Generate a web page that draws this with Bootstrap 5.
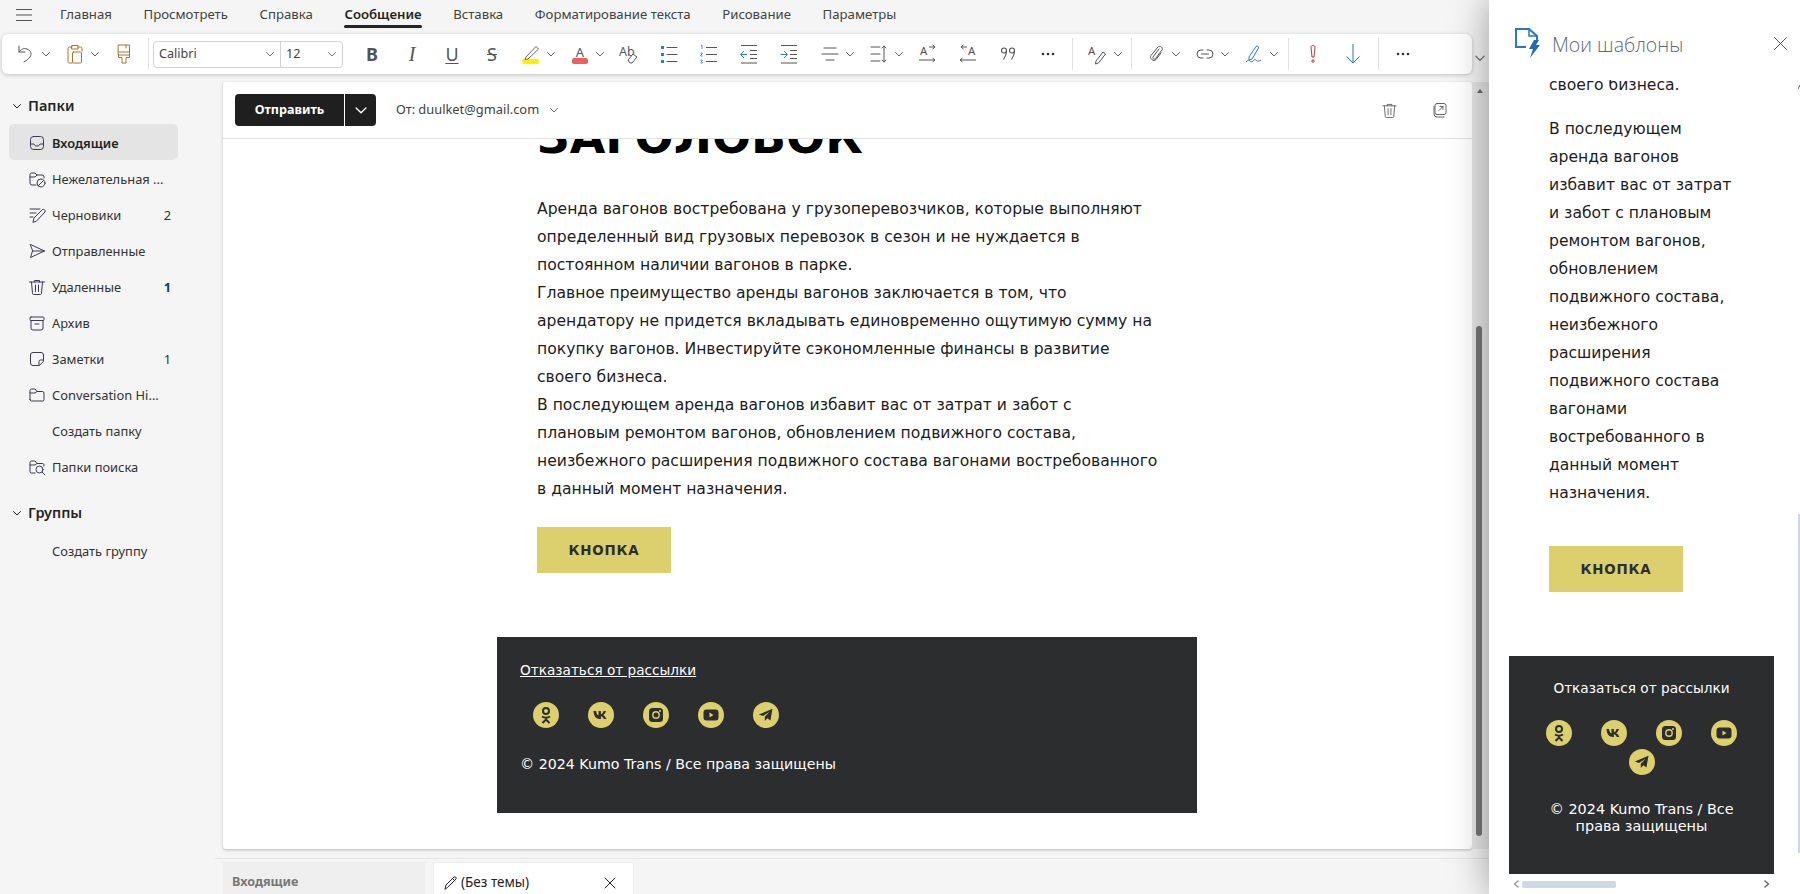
<!DOCTYPE html>
<html lang="ru">
<head>
<meta charset="utf-8">
<title>Outlook</title>
<link href="https://cdn.jsdelivr.net/npm/bootstrap@5.3.0/dist/css/bootstrap.min.css" rel="stylesheet">
<style>
html,body{height:100%;margin:0;overflow:hidden}
body{background:#f5f5f5;font-family:"Noto Sans","Open Sans",sans-serif;color:#242424}
.app{width:1800px;height:894px;overflow:hidden}
.mainp{width:1489px;height:894px;flex:none}
.sico{display:block;fill:none;stroke:currentColor;stroke-width:1;stroke-linecap:round;stroke-linejoin:round}
.tabrow{height:34px;flex:none;font-size:13.2px;color:#424242;padding-bottom:4px}
.burger{width:60px;padding-left:16px;color:#555}
.tabx{margin-right:31.600px;position:relative;white-space:nowrap}
.tabx.act{font-weight:600;color:#242424}
.tabx.act::after{content:"";display:block;height:3px;background:#242424;border-radius:2px;position:absolute;left:0;right:0;top:20px}
.ribrow{height:40px;flex:none}
.ribbon{margin-left:2px;width:1470px;height:40px;flex:none;background:#fff;border-radius:6px;box-shadow:0 1px 4px rgba(0,0,0,.22);padding-left:12px;color:#555}
.ribcol{margin:18px 0 0 2px;color:#666}
.cell24,.cell40,.cellc{display:flex;align-items:center;justify-content:center;flex:none;height:32px}
.cell24{width:24px}.cell40{width:40px}.cellc{width:16px;color:#666}
.gr49{display:flex;flex:none;width:49px}
.gr40{display:flex;flex:none;width:40px}
.vsep{width:1px;height:32px;background:#e0e0e0;flex:none}
.m12{margin-left:12px}.m5{margin-left:5px}.m4{margin-left:4px}.m6{margin-left:6px}.m7{margin-left:7px}.m9{margin-left:9px}.m8{margin-left:8px}.m13{margin-left:13px}.mn4{margin-left:-4px}
.fontsel{width:190px;height:27px;border:1px solid #d1d1d1;border-radius:4px;font-size:12.6px;color:#424242;flex:none}
.fnm{width:127px;border-right:1px solid #d1d1d1;padding:0 5px;height:100%}
.fsz{flex:1;padding:0 5px;height:100%}
.chvg{color:#777}
.tchar{font-size:18px;line-height:1;color:#555}
.serifi{font-family:"Liberation Serif",serif;font-style:italic;font-size:20px}
.uline{text-decoration:underline;text-underline-offset:2px;text-decoration-thickness:1px}
.strk{text-decoration:line-through;text-decoration-thickness:1px}
.bronze{color:#a8742a}
.bodyrow{min-height:0}
.sidep{width:223px;flex:none;padding-top:14px;font-size:12.9px;color:#333}
.shead{height:36px;font-size:14.5px;font-weight:600;padding-left:12px;gap:6px;color:#242424}
.shead.grp{margin-top:11px}
.sitem{height:36px;width:169px;margin-left:9px;padding:4px 7px 0 19px;border-radius:5px;white-space:nowrap}
.sitem.newg{margin-top:1px}
.sitem.sel{background:#e4e4e4;font-weight:600;color:#242424}
.sitem .lbl{margin-left:6px;flex:1;overflow:hidden}
.sitem .sic{width:18px;flex:none;color:#3a3a55;margin-top:-3px}
.noicon .lbl{margin-left:24px}
.cnt{flex:none;width:14px;text-align:right}
.cnt.bld{font-weight:700;color:#0f3f66}
.composer{width:1249px;margin:8px 0 9px;background:#fff;border-radius:3px;box-shadow:0 1px 3px rgba(0,0,0,.25);overflow:hidden;flex:none}
.chead{height:57px;border-bottom:1px solid #e1e1e1;padding-left:12px;flex:none}
.sendgrp{width:141px;height:32px;background:#1f1f1f;border-radius:4px;color:#fff;flex:none}
.sendt{width:110px;font-size:12.6px;font-weight:700;text-align:center;border-right:1px solid #fff;line-height:32px}
.sendc{flex:1}
.fromt{margin-left:20px;font-size:12.9px;color:#424242;gap:10px}
.ot{margin-right:3px}
.cact{margin-left:auto;padding-right:24px;gap:35px;color:#666}
.scrollv{overflow:hidden;min-height:0;flex:1}
.mailb{width:700px;margin:-26px 0 0 274px;font-family:"DejaVu Sans","Noto Sans",sans-serif;color:#1c1c1c}
.mailin{padding:0 39px 0 40px}
.bighd{font-size:46px;font-weight:700;line-height:48px;margin:0 0 34px;color:#000;white-space:nowrap}
.bodytx{font-size:15.6px;line-height:28px;margin:0;white-space:nowrap}
.yelbtn{display:flex;align-items:center;justify-content:center;width:134px;height:46px;padding-top:3px;background:#dccf6d;color:#2c2d2f;font-weight:700;font-size:13.4px;letter-spacing:.8px;text-decoration:none;flex:none}
.mt24x{margin-top:24px}
.mt40x{margin-top:40px}
.mfoot{background:#2c2d2f;color:#fff;width:700px;height:176px;margin-top:64px;padding:23px 23px 0;font-size:13.65px}
.mfoot a,.pfoot a{color:#fff;line-height:20px;display:block}
.socrow{display:flex;flex-wrap:wrap;margin:20px 0 25px -2px}
.soccell{width:55px;height:29px;display:flex;align-items:center;justify-content:center;flex:none}
.copyl{line-height:20px;font-size:14.2px}
.vbar{width:17px;margin:8px 0 9px;flex:none;background:#e6e6e6;display:flex;flex-direction:column;align-items:center}
.varrow{width:0;height:0;border-left:3px solid transparent;border-right:3px solid transparent;border-bottom:4px solid #666;margin-top:7px;margin-left:-2px}
.vthumb{width:6px;margin-left:-3px;background:#757575;border-radius:3px;height:510px;margin-top:233px}
.btmrow{height:36px;margin-left:215px;border-top:1px solid #e6e6e6;padding:3px 0 0 8px;gap:8px;flex:none;font-size:12.6px}
.btab{width:202px;height:40px;padding-left:9px;background:#efefef;color:#777;font-weight:700;flex:none}
.btab2{width:201px;height:40px;padding:0 17px 0 9px;background:#fff;color:#242424;border:1px solid #eee;border-bottom:0;gap:2px;font-size:13.5px;flex:none}
.btab2 .nm{flex:1}
.panelx{width:311px;height:894px;background:#fff;box-shadow:0 0 36px rgba(0,0,0,.38);position:relative;z-index:2;flex:none}
.phead{height:80px;flex:none;padding:0 13px 0 26px}
.picon{margin-top:8px}
.ptitle{margin-left:11px;font-size:19.5px;font-weight:300;color:#5d6a76;flex:1;padding-top:10px;font-family:"Open Sans","Noto Sans",sans-serif}
.pxclose{color:#555;margin-top:6px}
.pbodyr{min-height:0;flex:1}
.pcontent{width:309px;flex:none;font-family:"DejaVu Sans",sans-serif;color:#1c1c1c;overflow:hidden}
.ptext{padding-left:60px;margin:-9px 0 0}
.ptext p{font-size:15.6px;line-height:28px;margin:0 0 16px;white-space:nowrap}
.ptext p:last-child{margin-bottom:0}
.pbtn{margin-left:60px;margin-top:39px}
.pfoot{background:#2c2d2f;color:#fff;width:265px;height:218px;margin:64px 0 0 20px;padding:24px 10px 0;font-size:14.4px;text-align:center;line-height:17px}
.pfoot a{text-decoration:none;line-height:17px;white-space:nowrap;font-size:13.65px}
.pfoot .socrow{justify-content:center;margin:21px 0 25px}
.hbar{height:20px;margin-left:20px;width:265px;gap:3px;padding:0 4px;color:#999}
.hthumb{width:94px;height:7px;background:#cfd9e3;border-radius:2px;flex:none}
.hsp{flex:1}
.harrr{color:#666}
.pstrip{flex:1;display:flex;flex-direction:column;align-items:flex-start}
.pmark{color:#666;margin-top:4px;flex:none}
.pthumb{width:2px;height:339px;background:#cfd9e3;margin-top:424px;flex:none}
</style>
</head>
<body>
<svg width="0" height="0" class="d-block position-absolute">
  <defs>
    <symbol id="chv" viewBox="0 0 10 10"><path d="M1.500 3.500 5 7l3.500-3.500"/></symbol>
    <symbol id="soc-ok" viewBox="0 0 26 26"><circle cx="13" cy="13" r="13" fill="#dccf6d" stroke="none"/><circle cx="13" cy="9" r="3" fill="none" stroke="#2c2d2f" stroke-width="2"/><path d="M9 14.500c2.500 1.600 5.500 1.600 8 0M13 16v1.500M9.500 21l3.500-3.500 3.500 3.500" fill="none" stroke="#2c2d2f" stroke-width="2"/></symbol>
    <symbol id="soc-vk" viewBox="0 0 26 26"><circle cx="13" cy="13" r="13" fill="#dccf6d" stroke="none"/><path d="M5.500 9h2.600c.2 2.600 1.300 4.100 2.400 4.500V9h2.400v3.300c1.100-.2 2.200-1.600 2.600-3.300h2.400c-.4 2-1.700 3.600-2.700 4.200 1 .5 2.500 1.800 3.200 3.900h-2.600c-.5-1.500-1.700-2.800-2.900-2.900V17H12c-3.900 0-6.300-3-6.500-8z" fill="#2c2d2f" stroke="none"/></symbol>
    <symbol id="soc-ig" viewBox="0 0 26 26"><circle cx="13" cy="13" r="13" fill="#dccf6d" stroke="none"/><rect x="6" y="6" width="14" height="14" rx="3.500" fill="#2c2d2f" stroke="none"/><circle cx="13" cy="13" r="3.200" fill="none" stroke="#dccf6d" stroke-width="1.400"/><circle cx="17" cy="9" r="1" fill="#dccf6d" stroke="none"/></symbol>
    <symbol id="soc-yt" viewBox="0 0 26 26"><circle cx="13" cy="13" r="13" fill="#dccf6d" stroke="none"/><rect x="5.500" y="7.500" width="15" height="11" rx="3" fill="#2c2d2f" stroke="none"/><path d="M11.500 10.500v5l4-2.500z" fill="#dccf6d" stroke="none"/></symbol>
    <symbol id="soc-tg" viewBox="0 0 26 26"><circle cx="13" cy="13" r="13" fill="#dccf6d" stroke="none"/><path d="M19.500 6.800 5.800 12.600l4.200 1.500 6.500-4.300-4.700 5v4.300l2.600-2.900 3 2.200z" fill="#2c2d2f" stroke="none"/></symbol>
  </defs>
</svg>
<div class="app d-flex">
  <div class="mainp d-flex flex-column">
    <div class="tabrow d-flex align-items-center">
      <div class="burger"><svg class="sico" width="16" height="14" viewBox="0 0 16 14"><path d="M0 1.500h16M0 7h16M0 12.500h16"/></svg></div>
      <div class="tabx">Главная</div>
      <div class="tabx">Просмотреть</div>
      <div class="tabx">Справка</div>
      <div class="tabx act">Сообщение</div>
      <div class="tabx">Вставка</div>
      <div class="tabx">Форматирование текста</div>
      <div class="tabx">Рисование</div>
      <div class="tabx">Параметры</div>
    </div>
    <div class="ribrow d-flex">
    <div class="ribbon d-flex align-items-center">
      <div class="gr49"><div class="cell24"><svg class="sico" width="18" height="20" viewBox="0 0 18 20"><path d="M2 2v6h6M2 8c2-3 5-4 8-3 4 1.500 5 5 3 8-1.500 2-3.500 3.500-6 5"/></svg></div><div class="cellc"><svg class="sico" width="10" height="10"><use href="#chv"/></svg></div></div>
      <div class="gr49"><div class="cell24 bronze"><svg class="sico" width="16" height="20" viewBox="0 0 16 20"><path d="M5 3H2.500A1.500 1.500 0 0 0 1 4.500v13A1.500 1.500 0 0 0 2.500 19H5M11 3h2.500A1.500 1.500 0 0 1 15 4.500V7M5 1.500h6V5H5zM6.500 8h7a1 1 0 0 1 1 1v9a1 1 0 0 1-1 1h-7a1 1 0 0 1-1-1V9a1 1 0 0 1 1-1z"/></svg></div><div class="cellc"><svg class="sico" width="10" height="10"><use href="#chv"/></svg></div></div>
      <div class="cell24 bronze"><svg class="sico" width="14" height="20" viewBox="0 0 14 20"><path d="M1.500 1h11v10h-11zM1.500 8h11M1.500 11v2.500h3.500V19h4v-5.500h3.500V11M9 1v3"/></svg></div>
      <div class="vsep m12"></div>
      <div class="fontsel d-flex m4">
        <div class="fnm d-flex align-items-center justify-content-between"><span>Calibri</span><svg class="sico chvg" width="10" height="10"><use href="#chv"/></svg></div>
        <div class="fsz d-flex align-items-center justify-content-between"><span>12</span><svg class="sico chvg" width="10" height="10"><use href="#chv"/></svg></div>
      </div>
      <div class="cell40 m9"><span class="tchar fw-bold">B</span></div>
      <div class="cell40"><span class="tchar serifi">I</span></div>
      <div class="cell40"><span class="tchar uline">U</span></div>
      <div class="cell40"><span class="tchar strk">S</span></div>
      <div class="gr49 m7"><div class="cell24"><svg width="20" height="20" viewBox="0 0 20 20"><rect x="1" y="15" width="17" height="5" rx="2" fill="#ffef00"/><path d="M5 13 15 2.500l2.500 2.500L7 15l-3 .5z" fill="#fff" stroke="#666"/></svg></div><div class="cellc"><svg class="sico" width="10" height="10"><use href="#chv"/></svg></div></div>
      <div class="gr49"><div class="cell24"><svg width="20" height="28" viewBox="0 -4 20 28"><rect x="2" y="14" width="16" height="6" rx="2" fill="#ea5f5f"/><text x="10" y="12.500" text-anchor="middle" font-size="13" font-family="Noto Sans" fill="#555">A</text></svg></div><div class="cellc"><svg class="sico" width="10" height="10"><use href="#chv"/></svg></div></div>
      <div class="cell24"><svg width="20" height="28" viewBox="0 -4 20 28"><text x="0" y="12" font-size="12.500" font-family="Noto Sans" fill="#555">Ab</text><path d="M9 16l5-6 4 3-5 6h-2z" fill="#fff" stroke="#555"/></svg></div>
      <div class="cell40 m8"><svg class="sico" width="20" height="20" viewBox="0 0 20 20"><rect x="2" y="2" width="3" height="3" fill="#2b7cd3" stroke="none"/><rect x="2" y="9" width="3" height="3" fill="#2b7cd3" stroke="none"/><rect x="2" y="16" width="3" height="3" fill="#2b7cd3" stroke="none"/><path d="M8 3.500h10M8 10.500h10M8 17.500h10"/></svg></div>
      <div class="cell40"><svg width="20" height="20" viewBox="0 0 20 20" fill="none" stroke="#555"><path d="M7 3.500h11M7 10.500h11M7 17.500h11"/><path d="M2 1.500 3 1v4M1.500 9h2l-2 3h2M1.500 16h2l-1 1.500 1 1.500h-2" stroke="#2b7cd3" stroke-width=".8"/></svg></div>
      <div class="cell40"><svg width="20" height="20" viewBox="0 0 20 20" fill="none" stroke="#555"><path d="M2 1.500h16M11 6.500h7M11 10.500h7M11 14.500h7M2 19h16"/><path d="M8 10.500H2M5 7l-3.500 3.500L5 14" stroke="#2b7cd3"/></svg></div>
      <div class="cell40"><svg width="20" height="20" viewBox="0 0 20 20" fill="none" stroke="#555"><path d="M2 1.500h16M11 6.500h7M11 10.500h7M11 14.500h7M2 19h16"/><path d="M1.500 10.500H8M5 7l3.500 3.500L5 14" stroke="#2b7cd3"/></svg></div>
      <div class="gr49 m9"><div class="cell24"><svg class="sico" width="18" height="16" viewBox="0 0 18 16"><path d="M3 2h12M1 8h16M5 14h8"/></svg></div><div class="cellc"><svg class="sico" width="10" height="10"><use href="#chv"/></svg></div></div>
      <div class="gr49"><div class="cell24"><svg class="sico" width="18" height="20" viewBox="0 0 18 20"><path d="M1 3h9M1 10h9M1 17h9M14 2v16M12 4l2-2 2 2M12 16l2 2 2-2"/></svg></div><div class="cellc"><svg class="sico" width="10" height="10"><use href="#chv"/></svg></div></div>
      <div class="cell24"><svg width="20" height="28" viewBox="0 -4 20 28" fill="none" stroke="#555"><text x="2" y="11" font-size="11.500" font-family="Noto Sans" fill="#555" stroke="none">A</text><path d="M11 3h6M14.500 1l2.500 2-2.500 2M1 16h16M14.500 14l2.500 2-2.500 2"/></svg></div>
      <div class="cell40 m8"><svg width="20" height="28" viewBox="0 -4 20 28" fill="none" stroke="#555"><text x="10" y="11" font-size="11.500" font-family="Noto Sans" fill="#555" stroke="none">A</text><path d="M3 3h6M5.500 1 3 3l2.500 2M2 16h16M4.500 14 2 16l2.500 2"/></svg></div>
      <div class="cell40"><svg width="16" height="16" viewBox="0 0 16 16" fill="none" stroke="#555" stroke-width="1.100"><circle cx="4" cy="4.500" r="2.500"/><circle cx="12" cy="4.500" r="2.500"/><path d="M6.500 4.500c0 3-1 6-3 9M14.500 4.500c0 3-1 6-3 9"/></svg></div>
      <div class="cell40"><svg width="14" height="4" viewBox="0 0 14 4" fill="#333"><circle cx="2" cy="2" r="1.300"/><circle cx="7" cy="2" r="1.300"/><circle cx="12" cy="2" r="1.300"/></svg></div>
      <div class="vsep m4"></div>
      <div class="gr49 m13"><div class="cell24"><svg width="20" height="28" viewBox="0 -4 20 28" fill="none" stroke="#555"><text x="0" y="11" font-size="11.500" font-family="Noto Sans" fill="#555" stroke="none">A</text><path d="M8 17 15 8l2.500 2L10.500 19l-3 1z"/></svg></div><div class="cellc"><svg class="sico" width="10" height="10"><use href="#chv"/></svg></div></div>
      <div class="vsep mn4"></div>
      <div class="gr49 m12"><div class="cell24"><svg class="sico" width="18" height="20" viewBox="0 0 18 20"><path d="M12 5 6 13c-1 1.500 1.500 3 2.500 1.500L15 6c1.500-2-2-5-4-3L4 11.500c-2 2.500 2.500 7 5 4L14 9"/></svg></div><div class="cellc"><svg class="sico" width="10" height="10"><use href="#chv"/></svg></div></div>
      <div class="gr49"><div class="cell24"><svg class="sico" width="18" height="12" viewBox="0 0 18 12"><path d="M7 2H5a4 4 0 0 0 0 8h2M11 2h2a4 4 0 0 1 0 8h-2M5.500 6h7"/></svg></div><div class="cellc"><svg class="sico" width="10" height="10"><use href="#chv"/></svg></div></div>
      <div class="gr40"><div class="cell24"><svg width="18" height="20" viewBox="0 0 18 20" fill="none" stroke="#2b78c2"><path d="M4 13 11 2.500c1-1 3 0 2.500 1.500L7 15l-3 1z"/><path d="M1 18c2-2 3-2 4-1s2 1 3 0 2-2 3-1 2 2 5 0"/></svg></div><div class="cellc"><svg class="sico" width="10" height="10"><use href="#chv"/></svg></div></div>
      <div class="vsep m6"></div>
      <div class="cell40 m4"><svg width="8" height="20" viewBox="0 0 8 20" fill="none" stroke="#a4262c" stroke-width=".9"><path d="M2 3c0-2 4-2 4 0l-1 10H3z"/><circle cx="4" cy="17" r="1.200"/></svg></div>
      <div class="cell40"><svg width="16" height="22" viewBox="0 0 16 22" fill="none" stroke="#1f77c9"><path d="M8 1v19M1.500 13.500 8 20l6.500-6.500"/></svg></div>
      <div class="vsep m5"></div>
      <div class="cell40 m4"><svg width="14" height="4" viewBox="0 0 14 4" fill="#333"><circle cx="2" cy="2" r="1.300"/><circle cx="7" cy="2" r="1.300"/><circle cx="12" cy="2" r="1.300"/></svg></div>
    </div>
    <svg class="sico ribcol" width="12" height="12" viewBox="0 0 10 10"><path d="M1.500 3.500 5 7l3.500-3.500"/></svg>
    </div>
    <div class="bodyrow d-flex flex-grow-1">
      <div class="sidep">
        <div class="shead d-flex align-items-center"><svg class="sico" width="10" height="10"><use href="#chv"/></svg><span>Папки</span></div>
        <div class="sitem sel d-flex align-items-center"><div class="sic"><svg class="sico" width="18" height="18" viewBox="0 0 18 18"><rect x="2.500" y="2.500" width="13" height="13" rx="3"/><path d="M2.500 10h3.500c.5 1.500 1.500 2 3 2s2.500-.5 3-2h3.500"/></svg></div><span class="lbl">Входящие</span></div>
        <div class="sitem d-flex align-items-center"><div class="sic"><svg class="sico" width="18" height="18" viewBox="0 0 18 18"><path d="M8 15H4a2 2 0 0 1-2-2V4.500A1.500 1.500 0 0 1 3.500 3H7l2 2h5a2 2 0 0 1 2 2v1M2 7h5l2-2"/><circle cx="13" cy="13" r="4"/><path d="m10.500 15.500 5-5"/></svg></div><span class="lbl">Нежелательная ...</span></div>
        <div class="sitem d-flex align-items-center"><div class="sic"><svg class="sico" width="18" height="18" viewBox="0 0 18 18"><path d="M2 3h10M2 7h6M2 11h3M5 16l1-4 8.500-8.500c1-1 3.500 1 2.500 2.500L8.500 15z"/></svg></div><span class="lbl">Черновики</span><span class="cnt">2</span></div>
        <div class="sitem d-flex align-items-center"><div class="sic"><svg class="sico" width="18" height="18" viewBox="0 0 18 18"><path d="M2.500 2.500 16.500 9l-14 6.500L4.500 9zM4.500 9h12"/></svg></div><span class="lbl">Отправленные</span></div>
        <div class="sitem d-flex align-items-center"><div class="sic"><svg class="sico" width="18" height="18" viewBox="0 0 18 18"><path d="M1.500 4h15M6.500 4V2.500h5V4M3.500 4l1 11.500c0 .5.500 1 1 1h7c.5 0 1-.5 1-1l1-11.500M7.500 7v6.500M10.500 7v6.500"/></svg></div><span class="lbl">Удаленные</span><span class="cnt bld">1</span></div>
        <div class="sitem d-flex align-items-center"><div class="sic"><svg class="sico" width="18" height="18" viewBox="0 0 18 18"><rect x="2" y="3" width="14" height="3.500" rx="1"/><path d="M3 6.500V14a2 2 0 0 0 2 2h8a2 2 0 0 0 2-2V6.500M7 10h4"/></svg></div><span class="lbl">Архив</span></div>
        <div class="sitem d-flex align-items-center"><div class="sic"><svg class="sico" width="18" height="18" viewBox="0 0 18 18"><path d="M11 15.500H5A2.500 2.500 0 0 1 2.500 13V5A2.500 2.500 0 0 1 5 2.500h8A2.500 2.500 0 0 1 15.500 5v6zM15.500 10H12.500A1.500 1.500 0 0 0 11 11.500v4"/></svg></div><span class="lbl">Заметки</span><span class="cnt">1</span></div>
        <div class="sitem d-flex align-items-center"><div class="sic"><svg class="sico" width="18" height="18" viewBox="0 0 18 18"><path d="M2 13.500v-9A1.500 1.500 0 0 1 3.500 3H7l2 2.500h5.500A1.500 1.500 0 0 1 16 7v6.500a1.500 1.500 0 0 1-1.500 1.500h-11A1.500 1.500 0 0 1 2 13.500zM2 7h5l2-1.500"/></svg></div><span class="lbl">Conversation Hi...</span></div>
        <div class="sitem noicon d-flex align-items-center"><span class="lbl">Создать папку</span></div>
        <div class="sitem d-flex align-items-center"><div class="sic"><svg class="sico" width="18" height="18" viewBox="0 0 18 18"><path d="M7 15H3.500A1.500 1.500 0 0 1 2 13.500v-9A1.500 1.500 0 0 1 3.500 3H7l2 2.500h5.500A1.500 1.500 0 0 1 16 7v1M2 7h5l2-1.500"/><circle cx="11.500" cy="11.500" r="3.500"/><path d="m14 14 3 3"/></svg></div><span class="lbl">Папки поиска</span></div>
        <div class="shead grp d-flex align-items-center"><svg class="sico" width="10" height="10"><use href="#chv"/></svg><span>Группы</span></div>
        <div class="sitem newg noicon d-flex align-items-center"><span class="lbl">Создать группу</span></div>
      </div>
      <div class="composer d-flex flex-column">
        <div class="chead d-flex align-items-center">
          <div class="sendgrp d-flex align-items-center"><div class="sendt">Отправить</div><div class="sendc d-flex justify-content-center"><svg class="sico" width="14" height="14" viewBox="0 0 10 10"><path d="M1.500 3.500 5 7l3.500-3.500"/></svg></div></div>
          <div class="fromt d-flex align-items-center"><span><span class="ot">От:</span>duulket@gmail.com</span><svg class="sico chvg" width="10" height="10"><use href="#chv"/></svg></div>
          <div class="cact d-flex align-items-center">
            <svg class="sico" width="15" height="17" viewBox="0 0 16 18"><path d="M1 4h14M5.500 4V2.500h5V4M2.500 4l1 11.500c0 .5.500 1 1 1h7c.5 0 1-.5 1-1l1-11.500M6.500 7v6.500M9.500 7v6.500"/></svg>
            <svg class="sico" width="16" height="18" viewBox="0 0 16 18"><rect x="3" y="2.500" width="11" height="11" rx="2"/><path d="M2 5v8a3 3 0 0 0 3 3h7M7 9.500l4-4M8 5.500h3v3"/></svg>
          </div>
        </div>
        <div class="scrollv">
          <div class="mailb">
            <div class="mailin">
              <h1 class="bighd">ЗАГОЛОВОК</h1>
              <p class="bodytx">Аренда вагонов востребована у грузоперевозчиков, которые выполняют<br>определенный вид грузовых перевозок в сезон и не нуждается в<br>постоянном наличии вагонов в парке.<br>Главное преимущество аренды вагонов заключается в том, что<br>арендатору не придется вкладывать единовременно ощутимую сумму на<br>покупку вагонов. Инвестируйте сэкономленные финансы в развитие<br>своего бизнеса.<br>В последующем аренда вагонов избавит вас от затрат и забот с<br>плановым ремонтом вагонов, обновлением подвижного состава,<br>неизбежного расширения подвижного состава вагонами востребованного<br>в данный момент назначения.</p>
              <a class="yelbtn mt24x" href="#">КНОПКА</a>
            </div>
            <div class="mfoot">
              <a href="#">Отказаться от рассылки</a>
              <div class="socrow">
                <div class="soccell"><svg width="26" height="26"><use href="#soc-ok"/></svg></div>
                <div class="soccell"><svg width="26" height="26"><use href="#soc-vk"/></svg></div>
                <div class="soccell"><svg width="26" height="26"><use href="#soc-ig"/></svg></div>
                <div class="soccell"><svg width="26" height="26"><use href="#soc-yt"/></svg></div>
                <div class="soccell"><svg width="26" height="26"><use href="#soc-tg"/></svg></div>
              </div>
              <div class="copyl">© 2024 Kumo Trans / Все права защищены</div>
            </div>
          </div>
        </div>
      </div>
      <div class="vbar"><div class="varrow"></div><div class="vthumb"></div></div>
    </div>
    <div class="btmrow d-flex">
      <div class="btab d-flex align-items-center">Входящие</div>
      <div class="btab2 d-flex align-items-center"><svg class="sico" width="16" height="16" viewBox="0 0 16 16"><path d="M2 14l1-4 8-8c1-1 3 1 2 2l-8 8zM9.500 3.500l2.500 2.500"/></svg><span class="nm">(Без темы)</span><svg class="sico" width="12" height="12" viewBox="0 0 12 12"><path d="m1 1 10 10M11 1 1 11"/></svg></div>
    </div>
  </div>
  <div class="panelx d-flex flex-column">
    <div class="phead d-flex align-items-center">
      <svg class="picon" width="26" height="32" viewBox="0 0 26 32" fill="none"><path d="M11 19H1V1h13l8 7v5" stroke="#2b78c2" stroke-width="2"/><path d="M14 1v7h8" stroke="#2b78c2" stroke-width="1.500"/><path d="M19 12h5l-3 5h4L15 30l3-9h-4z" fill="#1f6cb5"/></svg>
      <div class="ptitle">Мои шаблоны</div>
      <svg class="sico pxclose" width="13" height="13" viewBox="0 0 13 13"><path d="m.5.500 12 12M12.500.5l-12 12"/></svg>
    </div>
    <div class="pbodyr d-flex">
      <div class="pcontent">
        <div class="ptext">
          <p>своего бизнеса.</p>
          <p>В последующем<br>аренда вагонов<br>избавит вас от затрат<br>и забот с плановым<br>ремонтом вагонов,<br>обновлением<br>подвижного состава,<br>неизбежного<br>расширения<br>подвижного состава<br>вагонами<br>востребованного в<br>данный момент<br>назначения.</p>
        </div>
        <a class="yelbtn pbtn" href="#">КНОПКА</a>
        <div class="pfoot">
          <a href="#">Отказаться от рассылки</a>
          <div class="socrow">
            <div class="soccell"><svg width="26" height="26"><use href="#soc-ok"/></svg></div>
            <div class="soccell"><svg width="26" height="26"><use href="#soc-vk"/></svg></div>
            <div class="soccell"><svg width="26" height="26"><use href="#soc-ig"/></svg></div>
            <div class="soccell"><svg width="26" height="26"><use href="#soc-yt"/></svg></div>
            <div class="soccell"><svg width="26" height="26"><use href="#soc-tg"/></svg></div>
          </div>
          <div>© 2024 Kumo Trans / Все<br>права защищены</div>
        </div>
        <div class="hbar d-flex align-items-center">
          <svg class="sico" width="6" height="8" viewBox="0 0 6 8"><path d="M5 1 1.500 4 5 7" stroke-width="1.500"/></svg>
          <div class="hthumb"></div><div class="hsp"></div>
          <svg class="sico harrr" width="6" height="8" viewBox="0 0 6 8"><path d="M1 1l3.500 3L1 7" stroke-width="1.500"/></svg>
        </div>
      </div>
      <div class="pstrip"><svg class="sico pmark" width="2" height="6" viewBox="0 0 2 6"><path d="M0 5 2 1"/></svg><div class="pthumb"></div></div>
    </div>
  </div>
</div>
</body>
</html>
